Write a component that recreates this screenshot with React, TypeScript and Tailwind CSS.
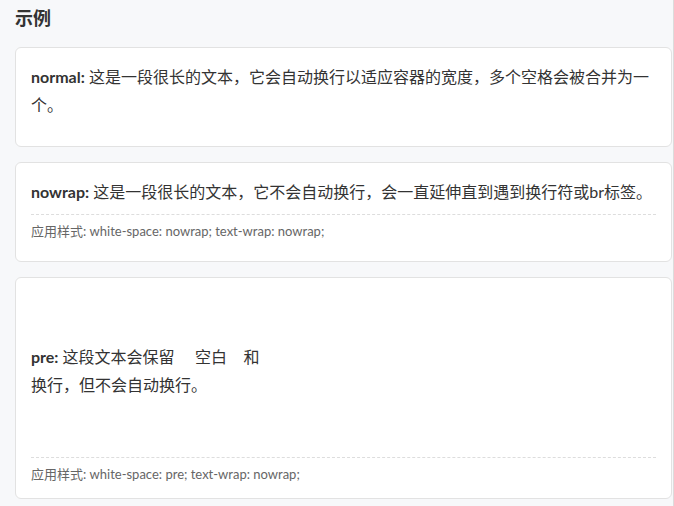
const sans = "font-['Lato','Noto_Sans_CJK_SC',sans-serif]";

type WrapMode = 'normal' | 'nowrap' | 'pre';

interface ExampleCardProps {
    label: string;
    text: string;
    hint?: string;
    mode: WrapMode;
}

const wrapClass: Record<WrapMode, string> = {
    normal: 'whitespace-normal',
    nowrap: 'whitespace-nowrap',
    pre: 'whitespace-pre py-[50px]',
};

const ExampleCard = ({ label, text, hint, mode }: ExampleCardProps) => {
    return (
        <div className="min-h-[100px] overflow-hidden rounded-md border border-[#e2e2e2] bg-white p-[15px]">
            <div className={`text-[16px] leading-7 text-[#333] ${wrapClass[mode]}`}>
                <strong className="font-bold">{label}</strong> {text}
            </div>
            {hint && (
                <div className="mt-2 border-t border-dashed border-[#dddddd] pt-2 text-[13px] leading-[17px] text-[#666]">
                    应用样式: {hint}
                </div>
            )}
        </div>
    );
};

export default function App() {
    return (
        <div className={`w-[674px] min-h-[506px] border-r border-[#dcdcdc] bg-[#f7f8fa] pl-[15px] pr-[1px] pt-1 ${sans}`}>
            <h3 className="mb-[15px] text-[18px] font-bold leading-7 text-[#333]">示例</h3>

            <div className="flex flex-col gap-[15px]">
                <ExampleCard
                    mode="normal"
                    label="normal:"
                    text="这是一段很长的文本，它会自动换行以适应容器的宽度，多个空格会被合并为一个。"
                />
                <ExampleCard
                    mode="nowrap"
                    label="nowrap:"
                    text="这是一段很长的文本，它不会自动换行，会一直延伸直到遇到换行符或br标签。"
                    hint="white-space: nowrap; text-wrap: nowrap;"
                />
                <ExampleCard
                    mode="pre"
                    label="pre:"
                    text={'这段文本会保留     空白    和\n换行，但不会自动换行。'}
                    hint="white-space: pre; text-wrap: nowrap;"
                />
            </div>
        </div>
    );
}
